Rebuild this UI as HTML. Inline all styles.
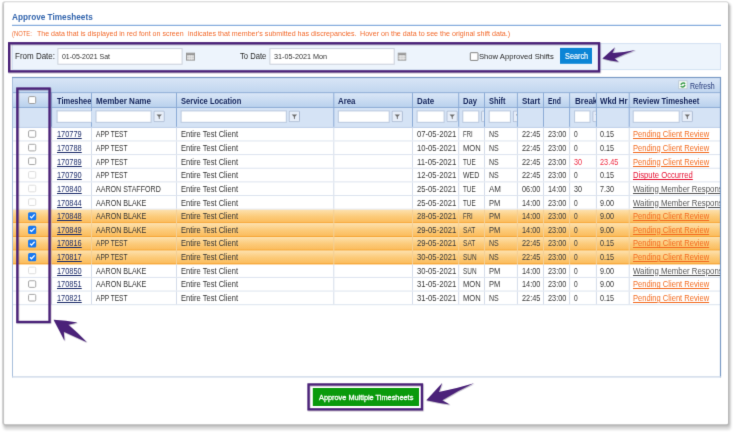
<!DOCTYPE html>
<html><head><meta charset="utf-8"><title>Approve Timesheets</title><style>
*{box-sizing:border-box;margin:0;padding:0}
html,body{width:736px;height:434px;overflow:hidden;background:#fff}
body{font-family:"Liberation Sans",sans-serif;font-size:8.2px;color:#333;position:relative}
#w{position:absolute;left:0;top:0;width:736px;height:434px;overflow:hidden;background:#fff;filter:url(#bl)}
.a{position:absolute;white-space:nowrap}
.t{line-height:12px;height:12px;transform-origin:0 50%}
.u{text-decoration:underline;text-decoration-thickness:.9px;text-underline-offset:1.1px}
svg.g{position:absolute;left:0;top:0}
</style></head><body>
<svg width="0" height="0" style="position:absolute"><filter id="bl" x="0" y="0" width="100%" height="100%" color-interpolation-filters="sRGB"><feConvolveMatrix order="3" kernelMatrix="0 .09 0 .09 .64 .09 0 .09 0" edgeMode="duplicate" preserveAlpha="true"/></filter></svg>
<div id="w">
<svg class="g" width="736" height="434" viewBox="0 0 736 434">
<defs>
<linearGradient id="gc" x1="0" y1="0" x2="0" y2="1"><stop offset="0" stop-color="#d8e5f6"/><stop offset="1" stop-color="#c1d6ef"/></linearGradient>
<linearGradient id="gh" x1="0" y1="0" x2="0" y2="1"><stop offset="0" stop-color="#dbe7f7"/><stop offset="1" stop-color="#b9d1ed"/></linearGradient>
<linearGradient id="go" x1="0" y1="0" x2="0" y2="1"><stop offset="0" stop-color="#fde1ae"/><stop offset=".5" stop-color="#fccb7a"/><stop offset="1" stop-color="#fbba58"/></linearGradient>
<filter id="ds" x="-20%" y="-20%" width="140%" height="140%"><feDropShadow dx=".5" dy=".7" stdDeviation=".5" flood-color="#2a1540" flood-opacity=".4"/></filter>
<filter id="cs" x="-5%" y="-5%" width="110%" height="110%"><feGaussianBlur stdDeviation=".8"/></filter><filter id="cs2" x="-5%" y="-5%" width="110%" height="110%"><feGaussianBlur stdDeviation="1"/></filter>
<symbol id="fb" viewBox="0 0 11.4 11.8"><rect x=".5" y=".5" width="10.4" height="10.8" rx="1" fill="#e7eef9" stroke="#aab9d2"/><path d="M3.1 4.1h5.4L6.3 6.3V8.7L5.3 8.1V6.3Z" fill="#6e6e6e"/></symbol>
<symbol id="cal" viewBox="0 0 9 8.4"><rect x=".5" y=".5" width="8" height="7.4" fill="#cbcbcb" stroke="#9a9a9a"/><rect x="1" y="1" width="7" height="1.5" fill="#929292"/><path d="M1 4.3h7M1 6.1h7M3.3 2.6v5M5.7 2.6v5" stroke="#ececec" stroke-width=".6"/></symbol>
</defs>
<g filter="url(#cs2)"><rect x="3.4" y="4" width="727.6" height="426" rx="3" fill="#000" opacity=".13"/></g>
<g filter="url(#cs)"><rect x="3.2" y="3" width="726.6" height="423.6" rx="2.5" fill="#000" opacity=".2"/></g>
<rect x="2.20" y="1.20" width="726.40" height="423.60" fill="#bdbdbd" rx="2.5" opacity=".62"/>
<rect x="4.10" y="2.30" width="723.90" height="422.00" fill="#fff" rx="1.5"/>
<rect x="12.00" y="24.80" width="709.00" height="1.00" fill="#6a9ad6"/>
<rect x="12.50" y="43.60" width="708.00" height="26.00" fill="#edf4fc" stroke="#d3e1f2" stroke-width="1"/>
<rect x="57.90" y="48.60" width="124.20" height="15.60" fill="#fff" stroke="#cbd1da" stroke-width="1"/>
<rect x="269.90" y="48.60" width="124.30" height="15.60" fill="#fff" stroke="#cbd1da" stroke-width="1"/>
<use href="#cal" x="186" y="52.4" width="9" height="8.4"/>
<use href="#cal" x="397.5" y="52.4" width="9" height="8.4"/>
<rect x="470.30" y="52.70" width="7.70" height="7.70" fill="#fff" stroke="#858585" stroke-width="1" rx="0.4"/>
<rect x="560.00" y="47.90" width="32.00" height="15.90" fill="#0b85d6"/>
<rect x="9.15" y="43.25" width="589.90" height="28.10" fill="none" stroke="#4b2279" stroke-width="2.3" filter="url(#ds)"/>
<path filter="url(#ds)" d="M602.4 58.4 L615 47.2 L612.4 53 Q624 52.4 635.5 50 Q624 54 614.6 58.6 L618.8 61.8 Q610 60.6 602.4 58.4Z" fill="#4b2279"/>
<rect x="12.50" y="77.50" width="708.00" height="299.40" fill="#fff"/>
<rect x="13.00" y="78.00" width="707.00" height="14.40" fill="url(#gc)"/>
<rect x="13.00" y="92.90" width="707.00" height="14.30" fill="url(#gh)"/>
<rect x="13.00" y="107.70" width="707.00" height="19.10" fill="#d5e3f5"/>
<rect x="13.00" y="92.15" width="707.00" height="1.00" fill="#8dacd6"/>
<rect x="13.00" y="106.95" width="707.00" height="1.00" fill="#8dacd6"/>
<rect x="13.00" y="126.80" width="707.00" height="1.00" fill="#b3c9e6"/>
<rect x="678.70" y="80.80" width="8.40" height="8.00" fill="#f6faf6" stroke="#b9c6d2" stroke-width="0.8"/>
<path transform="translate(678.5 80.7)" d="M2.2 5.4A2.3 2.3 0 0 0 5.6 5.6L6.6 4.4M6.6 3A2.3 2.3 0 0 0 3.3 2.8L2.2 4" stroke="#3c9c4c" stroke-width="1.5" fill="none"/>
<rect x="51.10" y="92.90" width="1.00" height="33.90" fill="#8dacd6"/>
<rect x="91.00" y="92.90" width="1.00" height="33.90" fill="#8dacd6"/>
<rect x="176.00" y="92.90" width="1.00" height="33.90" fill="#8dacd6"/>
<rect x="333.30" y="92.90" width="1.00" height="33.90" fill="#8dacd6"/>
<rect x="412.00" y="92.90" width="1.00" height="33.90" fill="#8dacd6"/>
<rect x="458.20" y="92.90" width="1.00" height="33.90" fill="#8dacd6"/>
<rect x="484.00" y="92.90" width="1.00" height="33.90" fill="#8dacd6"/>
<rect x="516.90" y="92.90" width="1.00" height="33.90" fill="#8dacd6"/>
<rect x="543.00" y="92.90" width="1.00" height="33.90" fill="#8dacd6"/>
<rect x="569.10" y="92.90" width="1.00" height="33.90" fill="#8dacd6"/>
<rect x="595.90" y="92.90" width="1.00" height="33.90" fill="#8dacd6"/>
<rect x="628.70" y="92.90" width="1.00" height="33.90" fill="#8dacd6"/>
<rect x="28.60" y="96.60" width="7.10" height="6.90" fill="#fff" stroke="#9a9a9a" stroke-width="0.95" rx="1.2"/>
<rect x="57.10" y="110.90" width="34.40" height="11.40" fill="#fff"/>
<rect x="56.60" y="110.40" width="34.40" height="1.00" fill="#b9c8de"/>
<rect x="56.60" y="121.80" width="34.40" height="1.00" fill="#b9c8de"/>
<rect x="56.60" y="110.40" width="1.00" height="12.40" fill="#b9c8de"/>
<rect x="96.00" y="110.90" width="55.10" height="11.40" fill="#fff" stroke="#b9c8de" stroke-width="1"/>
<use href="#fb" x="153.40" y="110.5" width="11.4" height="11.8"/>
<rect x="181.10" y="110.90" width="105.20" height="11.40" fill="#fff" stroke="#b9c8de" stroke-width="1"/>
<use href="#fb" x="288.60" y="110.5" width="11.4" height="11.8"/>
<rect x="338.30" y="110.90" width="50.90" height="11.40" fill="#fff" stroke="#b9c8de" stroke-width="1"/>
<use href="#fb" x="391.50" y="110.5" width="11.4" height="11.8"/>
<rect x="417.10" y="110.90" width="27.00" height="11.40" fill="#fff" stroke="#b9c8de" stroke-width="1"/>
<clipPath id="c446"><rect x="445.40" y="108" width="12.80" height="18"/></clipPath><g clip-path="url(#c446)"><use href="#fb" x="446.40" y="110.5" width="11.4" height="11.8"/></g>
<rect x="462.80" y="110.90" width="16.00" height="11.40" fill="#fff" stroke="#b9c8de" stroke-width="1"/>
<clipPath id="c481"><rect x="480.10" y="108" width="3.90" height="18"/></clipPath><g clip-path="url(#c481)"><use href="#fb" x="481.10" y="110.5" width="11.4" height="11.8"/></g>
<rect x="489.20" y="110.90" width="21.20" height="11.40" fill="#fff" stroke="#b9c8de" stroke-width="1"/>
<clipPath id="c512"><rect x="511.70" y="108" width="5.20" height="18"/></clipPath><g clip-path="url(#c512)"><use href="#fb" x="512.70" y="110.5" width="11.4" height="11.8"/></g>
<rect x="574.60" y="110.90" width="15.40" height="11.40" fill="#fff" stroke="#b9c8de" stroke-width="1"/>
<clipPath id="c592"><rect x="591.30" y="108" width="4.60" height="18"/></clipPath><g clip-path="url(#c592)"><use href="#fb" x="592.30" y="110.5" width="11.4" height="11.8"/></g>
<rect x="633.20" y="110.90" width="46.00" height="11.40" fill="#fff" stroke="#b9c8de" stroke-width="1"/>
<use href="#fb" x="681.50" y="110.5" width="11.4" height="11.8"/>
<rect x="13.00" y="140.45" width="707.00" height="1.00" fill="#dde4ef"/>
<rect x="51.10" y="127.80" width="1.00" height="12.65" fill="#d5ddea"/>
<rect x="91.00" y="127.80" width="1.00" height="12.65" fill="#d5ddea"/>
<rect x="176.00" y="127.80" width="1.00" height="12.65" fill="#d5ddea"/>
<rect x="333.30" y="127.80" width="1.00" height="12.65" fill="#d5ddea"/>
<rect x="412.00" y="127.80" width="1.00" height="12.65" fill="#d5ddea"/>
<rect x="458.20" y="127.80" width="1.00" height="12.65" fill="#d5ddea"/>
<rect x="484.00" y="127.80" width="1.00" height="12.65" fill="#d5ddea"/>
<rect x="516.90" y="127.80" width="1.00" height="12.65" fill="#d5ddea"/>
<rect x="543.00" y="127.80" width="1.00" height="12.65" fill="#d5ddea"/>
<rect x="569.10" y="127.80" width="1.00" height="12.65" fill="#d5ddea"/>
<rect x="595.90" y="127.80" width="1.00" height="12.65" fill="#d5ddea"/>
<rect x="628.70" y="127.80" width="1.00" height="12.65" fill="#d5ddea"/>
<rect x="28.55" y="130.65" width="7.20" height="6.60" fill="#fff" stroke="#a2a2a2" stroke-width="0.95" rx="1.2"/>
<rect x="13.00" y="154.09" width="707.00" height="1.00" fill="#dde4ef"/>
<rect x="51.10" y="141.45" width="1.00" height="12.65" fill="#d5ddea"/>
<rect x="91.00" y="141.45" width="1.00" height="12.65" fill="#d5ddea"/>
<rect x="176.00" y="141.45" width="1.00" height="12.65" fill="#d5ddea"/>
<rect x="333.30" y="141.45" width="1.00" height="12.65" fill="#d5ddea"/>
<rect x="412.00" y="141.45" width="1.00" height="12.65" fill="#d5ddea"/>
<rect x="458.20" y="141.45" width="1.00" height="12.65" fill="#d5ddea"/>
<rect x="484.00" y="141.45" width="1.00" height="12.65" fill="#d5ddea"/>
<rect x="516.90" y="141.45" width="1.00" height="12.65" fill="#d5ddea"/>
<rect x="543.00" y="141.45" width="1.00" height="12.65" fill="#d5ddea"/>
<rect x="569.10" y="141.45" width="1.00" height="12.65" fill="#d5ddea"/>
<rect x="595.90" y="141.45" width="1.00" height="12.65" fill="#d5ddea"/>
<rect x="628.70" y="141.45" width="1.00" height="12.65" fill="#d5ddea"/>
<rect x="28.55" y="144.30" width="7.20" height="6.60" fill="#fff" stroke="#a2a2a2" stroke-width="0.95" rx="1.2"/>
<rect x="13.00" y="167.74" width="707.00" height="1.00" fill="#dde4ef"/>
<rect x="51.10" y="155.09" width="1.00" height="12.65" fill="#d5ddea"/>
<rect x="91.00" y="155.09" width="1.00" height="12.65" fill="#d5ddea"/>
<rect x="176.00" y="155.09" width="1.00" height="12.65" fill="#d5ddea"/>
<rect x="333.30" y="155.09" width="1.00" height="12.65" fill="#d5ddea"/>
<rect x="412.00" y="155.09" width="1.00" height="12.65" fill="#d5ddea"/>
<rect x="458.20" y="155.09" width="1.00" height="12.65" fill="#d5ddea"/>
<rect x="484.00" y="155.09" width="1.00" height="12.65" fill="#d5ddea"/>
<rect x="516.90" y="155.09" width="1.00" height="12.65" fill="#d5ddea"/>
<rect x="543.00" y="155.09" width="1.00" height="12.65" fill="#d5ddea"/>
<rect x="569.10" y="155.09" width="1.00" height="12.65" fill="#d5ddea"/>
<rect x="595.90" y="155.09" width="1.00" height="12.65" fill="#d5ddea"/>
<rect x="628.70" y="155.09" width="1.00" height="12.65" fill="#d5ddea"/>
<rect x="28.55" y="157.94" width="7.20" height="6.60" fill="#fff" stroke="#a2a2a2" stroke-width="0.95" rx="1.2"/>
<rect x="13.00" y="181.38" width="707.00" height="1.00" fill="#dde4ef"/>
<rect x="51.10" y="168.74" width="1.00" height="12.65" fill="#d5ddea"/>
<rect x="91.00" y="168.74" width="1.00" height="12.65" fill="#d5ddea"/>
<rect x="176.00" y="168.74" width="1.00" height="12.65" fill="#d5ddea"/>
<rect x="333.30" y="168.74" width="1.00" height="12.65" fill="#d5ddea"/>
<rect x="412.00" y="168.74" width="1.00" height="12.65" fill="#d5ddea"/>
<rect x="458.20" y="168.74" width="1.00" height="12.65" fill="#d5ddea"/>
<rect x="484.00" y="168.74" width="1.00" height="12.65" fill="#d5ddea"/>
<rect x="516.90" y="168.74" width="1.00" height="12.65" fill="#d5ddea"/>
<rect x="543.00" y="168.74" width="1.00" height="12.65" fill="#d5ddea"/>
<rect x="569.10" y="168.74" width="1.00" height="12.65" fill="#d5ddea"/>
<rect x="595.90" y="168.74" width="1.00" height="12.65" fill="#d5ddea"/>
<rect x="628.70" y="168.74" width="1.00" height="12.65" fill="#d5ddea"/>
<rect x="28.55" y="171.59" width="7.20" height="6.60" fill="#fff" stroke="#dcdcdc" stroke-width="0.95" rx="1.2"/>
<rect x="13.00" y="195.03" width="707.00" height="1.00" fill="#dde4ef"/>
<rect x="51.10" y="182.38" width="1.00" height="12.65" fill="#d5ddea"/>
<rect x="91.00" y="182.38" width="1.00" height="12.65" fill="#d5ddea"/>
<rect x="176.00" y="182.38" width="1.00" height="12.65" fill="#d5ddea"/>
<rect x="333.30" y="182.38" width="1.00" height="12.65" fill="#d5ddea"/>
<rect x="412.00" y="182.38" width="1.00" height="12.65" fill="#d5ddea"/>
<rect x="458.20" y="182.38" width="1.00" height="12.65" fill="#d5ddea"/>
<rect x="484.00" y="182.38" width="1.00" height="12.65" fill="#d5ddea"/>
<rect x="516.90" y="182.38" width="1.00" height="12.65" fill="#d5ddea"/>
<rect x="543.00" y="182.38" width="1.00" height="12.65" fill="#d5ddea"/>
<rect x="569.10" y="182.38" width="1.00" height="12.65" fill="#d5ddea"/>
<rect x="595.90" y="182.38" width="1.00" height="12.65" fill="#d5ddea"/>
<rect x="628.70" y="182.38" width="1.00" height="12.65" fill="#d5ddea"/>
<rect x="28.55" y="185.23" width="7.20" height="6.60" fill="#fff" stroke="#dcdcdc" stroke-width="0.95" rx="1.2"/>
<rect x="13.00" y="208.68" width="707.00" height="1.00" fill="#dde4ef"/>
<rect x="51.10" y="196.03" width="1.00" height="12.65" fill="#d5ddea"/>
<rect x="91.00" y="196.03" width="1.00" height="12.65" fill="#d5ddea"/>
<rect x="176.00" y="196.03" width="1.00" height="12.65" fill="#d5ddea"/>
<rect x="333.30" y="196.03" width="1.00" height="12.65" fill="#d5ddea"/>
<rect x="412.00" y="196.03" width="1.00" height="12.65" fill="#d5ddea"/>
<rect x="458.20" y="196.03" width="1.00" height="12.65" fill="#d5ddea"/>
<rect x="484.00" y="196.03" width="1.00" height="12.65" fill="#d5ddea"/>
<rect x="516.90" y="196.03" width="1.00" height="12.65" fill="#d5ddea"/>
<rect x="543.00" y="196.03" width="1.00" height="12.65" fill="#d5ddea"/>
<rect x="569.10" y="196.03" width="1.00" height="12.65" fill="#d5ddea"/>
<rect x="595.90" y="196.03" width="1.00" height="12.65" fill="#d5ddea"/>
<rect x="628.70" y="196.03" width="1.00" height="12.65" fill="#d5ddea"/>
<rect x="28.55" y="198.88" width="7.20" height="6.60" fill="#fff" stroke="#dcdcdc" stroke-width="0.95" rx="1.2"/>
<rect x="13.00" y="209.68" width="707.00" height="13.65" fill="url(#go)"/>
<rect x="13.00" y="222.32" width="707.00" height="1.00" fill="#f6a535"/>
<rect x="51.10" y="209.68" width="1.00" height="13.65" fill="#f3cf95"/>
<rect x="91.00" y="209.68" width="1.00" height="13.65" fill="#f3cf95"/>
<rect x="176.00" y="209.68" width="1.00" height="13.65" fill="#f3cf95"/>
<rect x="333.30" y="209.68" width="1.00" height="13.65" fill="#f3cf95"/>
<rect x="412.00" y="209.68" width="1.00" height="13.65" fill="#f3cf95"/>
<rect x="458.20" y="209.68" width="1.00" height="13.65" fill="#f3cf95"/>
<rect x="484.00" y="209.68" width="1.00" height="13.65" fill="#f3cf95"/>
<rect x="516.90" y="209.68" width="1.00" height="13.65" fill="#f3cf95"/>
<rect x="543.00" y="209.68" width="1.00" height="13.65" fill="#f3cf95"/>
<rect x="569.10" y="209.68" width="1.00" height="13.65" fill="#f3cf95"/>
<rect x="595.90" y="209.68" width="1.00" height="13.65" fill="#f3cf95"/>
<rect x="628.70" y="209.68" width="1.00" height="13.65" fill="#f3cf95"/>
<rect x="28.10" y="212.18" width="8.10" height="8.10" fill="#1878f0" rx="1.5"/>
<path transform="translate(28.3 212.43)" d="M1.7 3.9L3.2 5.4L6.3 2.0" stroke="#fff" stroke-width="1.25" fill="none"/>
<rect x="13.00" y="223.32" width="707.00" height="13.65" fill="url(#go)"/>
<rect x="13.00" y="235.97" width="707.00" height="1.00" fill="#f6a535"/>
<rect x="51.10" y="223.32" width="1.00" height="13.65" fill="#f3cf95"/>
<rect x="91.00" y="223.32" width="1.00" height="13.65" fill="#f3cf95"/>
<rect x="176.00" y="223.32" width="1.00" height="13.65" fill="#f3cf95"/>
<rect x="333.30" y="223.32" width="1.00" height="13.65" fill="#f3cf95"/>
<rect x="412.00" y="223.32" width="1.00" height="13.65" fill="#f3cf95"/>
<rect x="458.20" y="223.32" width="1.00" height="13.65" fill="#f3cf95"/>
<rect x="484.00" y="223.32" width="1.00" height="13.65" fill="#f3cf95"/>
<rect x="516.90" y="223.32" width="1.00" height="13.65" fill="#f3cf95"/>
<rect x="543.00" y="223.32" width="1.00" height="13.65" fill="#f3cf95"/>
<rect x="569.10" y="223.32" width="1.00" height="13.65" fill="#f3cf95"/>
<rect x="595.90" y="223.32" width="1.00" height="13.65" fill="#f3cf95"/>
<rect x="628.70" y="223.32" width="1.00" height="13.65" fill="#f3cf95"/>
<rect x="28.10" y="225.82" width="8.10" height="8.10" fill="#1878f0" rx="1.5"/>
<path transform="translate(28.3 226.07)" d="M1.7 3.9L3.2 5.4L6.3 2.0" stroke="#fff" stroke-width="1.25" fill="none"/>
<rect x="13.00" y="236.97" width="707.00" height="13.65" fill="url(#go)"/>
<rect x="13.00" y="249.61" width="707.00" height="1.00" fill="#f6a535"/>
<rect x="51.10" y="236.97" width="1.00" height="13.65" fill="#f3cf95"/>
<rect x="91.00" y="236.97" width="1.00" height="13.65" fill="#f3cf95"/>
<rect x="176.00" y="236.97" width="1.00" height="13.65" fill="#f3cf95"/>
<rect x="333.30" y="236.97" width="1.00" height="13.65" fill="#f3cf95"/>
<rect x="412.00" y="236.97" width="1.00" height="13.65" fill="#f3cf95"/>
<rect x="458.20" y="236.97" width="1.00" height="13.65" fill="#f3cf95"/>
<rect x="484.00" y="236.97" width="1.00" height="13.65" fill="#f3cf95"/>
<rect x="516.90" y="236.97" width="1.00" height="13.65" fill="#f3cf95"/>
<rect x="543.00" y="236.97" width="1.00" height="13.65" fill="#f3cf95"/>
<rect x="569.10" y="236.97" width="1.00" height="13.65" fill="#f3cf95"/>
<rect x="595.90" y="236.97" width="1.00" height="13.65" fill="#f3cf95"/>
<rect x="628.70" y="236.97" width="1.00" height="13.65" fill="#f3cf95"/>
<rect x="28.10" y="239.47" width="8.10" height="8.10" fill="#1878f0" rx="1.5"/>
<path transform="translate(28.3 239.72)" d="M1.7 3.9L3.2 5.4L6.3 2.0" stroke="#fff" stroke-width="1.25" fill="none"/>
<rect x="13.00" y="250.61" width="707.00" height="13.65" fill="url(#go)"/>
<rect x="13.00" y="263.26" width="707.00" height="1.00" fill="#f6a535"/>
<rect x="51.10" y="250.61" width="1.00" height="13.65" fill="#f3cf95"/>
<rect x="91.00" y="250.61" width="1.00" height="13.65" fill="#f3cf95"/>
<rect x="176.00" y="250.61" width="1.00" height="13.65" fill="#f3cf95"/>
<rect x="333.30" y="250.61" width="1.00" height="13.65" fill="#f3cf95"/>
<rect x="412.00" y="250.61" width="1.00" height="13.65" fill="#f3cf95"/>
<rect x="458.20" y="250.61" width="1.00" height="13.65" fill="#f3cf95"/>
<rect x="484.00" y="250.61" width="1.00" height="13.65" fill="#f3cf95"/>
<rect x="516.90" y="250.61" width="1.00" height="13.65" fill="#f3cf95"/>
<rect x="543.00" y="250.61" width="1.00" height="13.65" fill="#f3cf95"/>
<rect x="569.10" y="250.61" width="1.00" height="13.65" fill="#f3cf95"/>
<rect x="595.90" y="250.61" width="1.00" height="13.65" fill="#f3cf95"/>
<rect x="628.70" y="250.61" width="1.00" height="13.65" fill="#f3cf95"/>
<rect x="28.10" y="253.11" width="8.10" height="8.10" fill="#1878f0" rx="1.5"/>
<path transform="translate(28.3 253.36)" d="M1.7 3.9L3.2 5.4L6.3 2.0" stroke="#fff" stroke-width="1.25" fill="none"/>
<rect x="13.00" y="276.91" width="707.00" height="1.00" fill="#dde4ef"/>
<rect x="51.10" y="264.26" width="1.00" height="12.65" fill="#d5ddea"/>
<rect x="91.00" y="264.26" width="1.00" height="12.65" fill="#d5ddea"/>
<rect x="176.00" y="264.26" width="1.00" height="12.65" fill="#d5ddea"/>
<rect x="333.30" y="264.26" width="1.00" height="12.65" fill="#d5ddea"/>
<rect x="412.00" y="264.26" width="1.00" height="12.65" fill="#d5ddea"/>
<rect x="458.20" y="264.26" width="1.00" height="12.65" fill="#d5ddea"/>
<rect x="484.00" y="264.26" width="1.00" height="12.65" fill="#d5ddea"/>
<rect x="516.90" y="264.26" width="1.00" height="12.65" fill="#d5ddea"/>
<rect x="543.00" y="264.26" width="1.00" height="12.65" fill="#d5ddea"/>
<rect x="569.10" y="264.26" width="1.00" height="12.65" fill="#d5ddea"/>
<rect x="595.90" y="264.26" width="1.00" height="12.65" fill="#d5ddea"/>
<rect x="628.70" y="264.26" width="1.00" height="12.65" fill="#d5ddea"/>
<rect x="28.55" y="267.11" width="7.20" height="6.60" fill="#fff" stroke="#dcdcdc" stroke-width="0.95" rx="1.2"/>
<rect x="13.00" y="290.55" width="707.00" height="1.00" fill="#dde4ef"/>
<rect x="51.10" y="277.91" width="1.00" height="12.65" fill="#d5ddea"/>
<rect x="91.00" y="277.91" width="1.00" height="12.65" fill="#d5ddea"/>
<rect x="176.00" y="277.91" width="1.00" height="12.65" fill="#d5ddea"/>
<rect x="333.30" y="277.91" width="1.00" height="12.65" fill="#d5ddea"/>
<rect x="412.00" y="277.91" width="1.00" height="12.65" fill="#d5ddea"/>
<rect x="458.20" y="277.91" width="1.00" height="12.65" fill="#d5ddea"/>
<rect x="484.00" y="277.91" width="1.00" height="12.65" fill="#d5ddea"/>
<rect x="516.90" y="277.91" width="1.00" height="12.65" fill="#d5ddea"/>
<rect x="543.00" y="277.91" width="1.00" height="12.65" fill="#d5ddea"/>
<rect x="569.10" y="277.91" width="1.00" height="12.65" fill="#d5ddea"/>
<rect x="595.90" y="277.91" width="1.00" height="12.65" fill="#d5ddea"/>
<rect x="628.70" y="277.91" width="1.00" height="12.65" fill="#d5ddea"/>
<rect x="28.55" y="280.76" width="7.20" height="6.60" fill="#fff" stroke="#a2a2a2" stroke-width="0.95" rx="1.2"/>
<rect x="13.00" y="304.20" width="707.00" height="1.00" fill="#dde4ef"/>
<rect x="51.10" y="291.55" width="1.00" height="12.65" fill="#d5ddea"/>
<rect x="91.00" y="291.55" width="1.00" height="12.65" fill="#d5ddea"/>
<rect x="176.00" y="291.55" width="1.00" height="12.65" fill="#d5ddea"/>
<rect x="333.30" y="291.55" width="1.00" height="12.65" fill="#d5ddea"/>
<rect x="412.00" y="291.55" width="1.00" height="12.65" fill="#d5ddea"/>
<rect x="458.20" y="291.55" width="1.00" height="12.65" fill="#d5ddea"/>
<rect x="484.00" y="291.55" width="1.00" height="12.65" fill="#d5ddea"/>
<rect x="516.90" y="291.55" width="1.00" height="12.65" fill="#d5ddea"/>
<rect x="543.00" y="291.55" width="1.00" height="12.65" fill="#d5ddea"/>
<rect x="569.10" y="291.55" width="1.00" height="12.65" fill="#d5ddea"/>
<rect x="595.90" y="291.55" width="1.00" height="12.65" fill="#d5ddea"/>
<rect x="628.70" y="291.55" width="1.00" height="12.65" fill="#d5ddea"/>
<rect x="28.55" y="294.40" width="7.20" height="6.60" fill="#fff" stroke="#a2a2a2" stroke-width="0.95" rx="1.2"/>
<rect x="12.00" y="77.00" width="1.00" height="300.40" fill="#a9bfdc"/>
<rect x="719.90" y="77.00" width="1.20" height="300.40" fill="#7b9bc6"/>
<rect x="12.00" y="76.90" width="709.00" height="1.20" fill="#7b9bc6"/>
<rect x="12.00" y="376.30" width="709.00" height="1.20" fill="#c6d3e6"/>
<rect x="17.35" y="88.55" width="32.20" height="233.40" fill="none" stroke="#4b2279" stroke-width="2.3" filter="url(#ds)"/>
<path filter="url(#ds)" d="M53.6 319.8 Q66 320.4 77.4 322.4 L68.4 324.8 Q78 333 86.9 342.2 Q75 337 63.8 331.8 L64.5 340.7 Q59 330 53.6 319.8Z" fill="#4b2279"/>
<rect x="312.80" y="388.00" width="106.20" height="18.00" fill="#0a9a0c"/>
<rect x="308.55" y="384.45" width="113.40" height="24.90" fill="none" stroke="#4b2279" stroke-width="2.3" filter="url(#ds)"/>
<path filter="url(#ds)" d="M426.3 400.3 L442.2 383 L438.9 392 Q456 388.6 473.9 383.2 Q457 391 442.3 400.2 L449.8 404.4 Q438 403 426.3 400.3Z" fill="#4b2279"/>
</svg>
<div class="a t" style="left:690.4px;top:80.00px;font-size:8.8px;color:#253878;transform:scaleX(0.8016)">Refresh</div>
<div class="a t u" style="left:57px;top:129.30px;font-size:8.2px;color:#1c2c6a;transform:scaleX(0.9057)">170779</div>
<div class="a t" style="left:96px;top:129.30px;font-size:8.2px;color:#333;transform:scaleX(0.8016)">APP TEST</div>
<div class="a t" style="left:181px;top:129.30px;font-size:8.2px;color:#333;transform:scaleX(0.9231)">Entire Test Client</div>
<div class="a t" style="left:417px;top:129.30px;font-size:8.2px;color:#3a3a3a;transform:scaleX(0.9382)">07-05-2021</div>
<div class="a t" style="left:463.3px;top:129.30px;font-size:8.2px;color:#3a3a3a;transform:scaleX(0.7347)">FRI</div>
<div class="a t" style="left:488.9px;top:129.30px;font-size:8.2px;color:#3a3a3a;transform:scaleX(0.8615)">NS</div>
<div class="a t" style="left:522px;top:129.30px;font-size:8.2px;color:#3a3a3a;transform:scaleX(0.8976)">22:45</div>
<div class="a t" style="left:548px;top:129.30px;font-size:8.2px;color:#3a3a3a;transform:scaleX(0.8976)">23:00</div>
<div class="a t" style="left:574.3px;top:129.30px;font-size:8.2px;color:#3a3a3a;transform:scaleX(0.811)">0</div>
<div class="a t" style="left:600.3px;top:129.30px;font-size:8.2px;color:#3a3a3a;transform:scaleX(0.8784)">0.15</div>
<div class="a t u" style="left:633.4px;top:129.30px;font-size:8.2px;color:#f36c21;transform:scaleX(0.9238)">Pending Client Review</div>
<div class="a t u" style="left:57px;top:142.95px;font-size:8.2px;color:#1c2c6a;transform:scaleX(0.9057)">170788</div>
<div class="a t" style="left:96px;top:142.95px;font-size:8.2px;color:#333;transform:scaleX(0.8016)">APP TEST</div>
<div class="a t" style="left:181px;top:142.95px;font-size:8.2px;color:#333;transform:scaleX(0.9231)">Entire Test Client</div>
<div class="a t" style="left:417px;top:142.95px;font-size:8.2px;color:#3a3a3a;transform:scaleX(0.9382)">10-05-2021</div>
<div class="a t" style="left:463.3px;top:142.95px;font-size:8.2px;color:#3a3a3a;transform:scaleX(0.9262)">MON</div>
<div class="a t" style="left:488.9px;top:142.95px;font-size:8.2px;color:#3a3a3a;transform:scaleX(0.8615)">NS</div>
<div class="a t" style="left:522px;top:142.95px;font-size:8.2px;color:#3a3a3a;transform:scaleX(0.8976)">22:45</div>
<div class="a t" style="left:548px;top:142.95px;font-size:8.2px;color:#3a3a3a;transform:scaleX(0.8976)">23:00</div>
<div class="a t" style="left:574.3px;top:142.95px;font-size:8.2px;color:#3a3a3a;transform:scaleX(0.811)">0</div>
<div class="a t" style="left:600.3px;top:142.95px;font-size:8.2px;color:#3a3a3a;transform:scaleX(0.8784)">0.15</div>
<div class="a t u" style="left:633.4px;top:142.95px;font-size:8.2px;color:#f36c21;transform:scaleX(0.9238)">Pending Client Review</div>
<div class="a t u" style="left:57px;top:156.59px;font-size:8.2px;color:#1c2c6a;transform:scaleX(0.9057)">170789</div>
<div class="a t" style="left:96px;top:156.59px;font-size:8.2px;color:#333;transform:scaleX(0.8016)">APP TEST</div>
<div class="a t" style="left:181px;top:156.59px;font-size:8.2px;color:#333;transform:scaleX(0.9231)">Entire Test Client</div>
<div class="a t" style="left:417px;top:156.59px;font-size:8.2px;color:#3a3a3a;transform:scaleX(0.952)">11-05-2021</div>
<div class="a t" style="left:463.3px;top:156.59px;font-size:8.2px;color:#3a3a3a;transform:scaleX(0.7695)">TUE</div>
<div class="a t" style="left:488.9px;top:156.59px;font-size:8.2px;color:#3a3a3a;transform:scaleX(0.8615)">NS</div>
<div class="a t" style="left:522px;top:156.59px;font-size:8.2px;color:#3a3a3a;transform:scaleX(0.8976)">22:45</div>
<div class="a t" style="left:548px;top:156.59px;font-size:8.2px;color:#3a3a3a;transform:scaleX(0.8976)">23:00</div>
<div class="a t" style="left:574.3px;top:156.59px;font-size:8.2px;color:#ee2d45;transform:scaleX(0.8782)">30</div>
<div class="a t" style="left:600.3px;top:156.59px;font-size:8.2px;color:#ee2d45;transform:scaleX(0.8927)">23.45</div>
<div class="a t u" style="left:633.4px;top:156.59px;font-size:8.2px;color:#f36c21;transform:scaleX(0.9238)">Pending Client Review</div>
<div class="a t u" style="left:57px;top:170.24px;font-size:8.2px;color:#1c2c6a;transform:scaleX(0.9057)">170790</div>
<div class="a t" style="left:96px;top:170.24px;font-size:8.2px;color:#333;transform:scaleX(0.8016)">APP TEST</div>
<div class="a t" style="left:181px;top:170.24px;font-size:8.2px;color:#333;transform:scaleX(0.9231)">Entire Test Client</div>
<div class="a t" style="left:417px;top:170.24px;font-size:8.2px;color:#3a3a3a;transform:scaleX(0.9382)">12-05-2021</div>
<div class="a t" style="left:463.3px;top:170.24px;font-size:8.2px;color:#3a3a3a;transform:scaleX(0.853)">WED</div>
<div class="a t" style="left:488.9px;top:170.24px;font-size:8.2px;color:#3a3a3a;transform:scaleX(0.8615)">NS</div>
<div class="a t" style="left:522px;top:170.24px;font-size:8.2px;color:#3a3a3a;transform:scaleX(0.8976)">22:45</div>
<div class="a t" style="left:548px;top:170.24px;font-size:8.2px;color:#3a3a3a;transform:scaleX(0.8976)">23:00</div>
<div class="a t" style="left:574.3px;top:170.24px;font-size:8.2px;color:#3a3a3a;transform:scaleX(0.811)">0</div>
<div class="a t" style="left:600.3px;top:170.24px;font-size:8.2px;color:#3a3a3a;transform:scaleX(0.8784)">0.15</div>
<div class="a t u" style="left:633.4px;top:170.24px;font-size:8.2px;color:#e60f30;transform:scaleX(0.9385)">Dispute Occurred</div>
<div class="a t u" style="left:57px;top:183.88px;font-size:8.2px;color:#1c2c6a;transform:scaleX(0.9057)">170840</div>
<div class="a t" style="left:96px;top:183.88px;font-size:8.2px;color:#333;transform:scaleX(0.8644)">AARON STAFFORD</div>
<div class="a t" style="left:181px;top:183.88px;font-size:8.2px;color:#333;transform:scaleX(0.9231)">Entire Test Client</div>
<div class="a t" style="left:417px;top:183.88px;font-size:8.2px;color:#3a3a3a;transform:scaleX(0.9382)">25-05-2021</div>
<div class="a t" style="left:463.3px;top:183.88px;font-size:8.2px;color:#3a3a3a;transform:scaleX(0.7695)">TUE</div>
<div class="a t" style="left:488.9px;top:183.88px;font-size:8.2px;color:#3a3a3a;transform:scaleX(0.9771)">AM</div>
<div class="a t" style="left:522px;top:183.88px;font-size:8.2px;color:#3a3a3a;transform:scaleX(0.8976)">06:00</div>
<div class="a t" style="left:548px;top:183.88px;font-size:8.2px;color:#3a3a3a;transform:scaleX(0.8976)">14:00</div>
<div class="a t" style="left:574.3px;top:183.88px;font-size:8.2px;color:#3a3a3a;transform:scaleX(0.8782)">30</div>
<div class="a t" style="left:600.3px;top:183.88px;font-size:8.2px;color:#3a3a3a;transform:scaleX(0.8784)">7.30</div>
<div class="a" style="left:633.4px;top:183.88px;width:86.80px;height:12px;overflow:hidden"><div class="a t u" style="left:0;top:0;font-size:8.2px;color:#555;transform:scaleX(0.955)">Waiting Member Response</div></div>
<div class="a t u" style="left:57px;top:197.53px;font-size:8.2px;color:#1c2c6a;transform:scaleX(0.9057)">170844</div>
<div class="a t" style="left:96px;top:197.53px;font-size:8.2px;color:#333;transform:scaleX(0.8694)">AARON BLAKE</div>
<div class="a t" style="left:181px;top:197.53px;font-size:8.2px;color:#333;transform:scaleX(0.9231)">Entire Test Client</div>
<div class="a t" style="left:417px;top:197.53px;font-size:8.2px;color:#3a3a3a;transform:scaleX(0.9382)">25-05-2021</div>
<div class="a t" style="left:463.3px;top:197.53px;font-size:8.2px;color:#3a3a3a;transform:scaleX(0.7695)">TUE</div>
<div class="a t" style="left:488.9px;top:197.53px;font-size:8.2px;color:#3a3a3a;transform:scaleX(0.9201)">PM</div>
<div class="a t" style="left:522px;top:197.53px;font-size:8.2px;color:#3a3a3a;transform:scaleX(0.8976)">14:00</div>
<div class="a t" style="left:548px;top:197.53px;font-size:8.2px;color:#3a3a3a;transform:scaleX(0.8976)">23:00</div>
<div class="a t" style="left:574.3px;top:197.53px;font-size:8.2px;color:#3a3a3a;transform:scaleX(0.811)">0</div>
<div class="a t" style="left:600.3px;top:197.53px;font-size:8.2px;color:#3a3a3a;transform:scaleX(0.8784)">9.00</div>
<div class="a" style="left:633.4px;top:197.53px;width:86.80px;height:12px;overflow:hidden"><div class="a t u" style="left:0;top:0;font-size:8.2px;color:#555;transform:scaleX(0.955)">Waiting Member Response</div></div>
<div class="a t u" style="left:57px;top:211.18px;font-size:8.2px;color:#1c2c6a;transform:scaleX(0.9057)">170848</div>
<div class="a t" style="left:96px;top:211.18px;font-size:8.2px;color:#333;transform:scaleX(0.8694)">AARON BLAKE</div>
<div class="a t" style="left:181px;top:211.18px;font-size:8.2px;color:#333;transform:scaleX(0.9231)">Entire Test Client</div>
<div class="a t" style="left:417px;top:211.18px;font-size:8.2px;color:#3a3a3a;transform:scaleX(0.9382)">28-05-2021</div>
<div class="a t" style="left:463.3px;top:211.18px;font-size:8.2px;color:#3a3a3a;transform:scaleX(0.7347)">FRI</div>
<div class="a t" style="left:488.9px;top:211.18px;font-size:8.2px;color:#3a3a3a;transform:scaleX(0.9201)">PM</div>
<div class="a t" style="left:522px;top:211.18px;font-size:8.2px;color:#3a3a3a;transform:scaleX(0.8976)">14:00</div>
<div class="a t" style="left:548px;top:211.18px;font-size:8.2px;color:#3a3a3a;transform:scaleX(0.8976)">23:00</div>
<div class="a t" style="left:574.3px;top:211.18px;font-size:8.2px;color:#3a3a3a;transform:scaleX(0.811)">0</div>
<div class="a t" style="left:600.3px;top:211.18px;font-size:8.2px;color:#3a3a3a;transform:scaleX(0.8784)">9.00</div>
<div class="a t u" style="left:633.4px;top:211.18px;font-size:8.2px;color:#f36c21;transform:scaleX(0.9238)">Pending Client Review</div>
<div class="a t u" style="left:57px;top:224.82px;font-size:8.2px;color:#1c2c6a;transform:scaleX(0.9057)">170849</div>
<div class="a t" style="left:96px;top:224.82px;font-size:8.2px;color:#333;transform:scaleX(0.8694)">AARON BLAKE</div>
<div class="a t" style="left:181px;top:224.82px;font-size:8.2px;color:#333;transform:scaleX(0.9231)">Entire Test Client</div>
<div class="a t" style="left:417px;top:224.82px;font-size:8.2px;color:#3a3a3a;transform:scaleX(0.9382)">29-05-2021</div>
<div class="a t" style="left:463.3px;top:224.82px;font-size:8.2px;color:#3a3a3a;transform:scaleX(0.809)">SAT</div>
<div class="a t" style="left:488.9px;top:224.82px;font-size:8.2px;color:#3a3a3a;transform:scaleX(0.9201)">PM</div>
<div class="a t" style="left:522px;top:224.82px;font-size:8.2px;color:#3a3a3a;transform:scaleX(0.8976)">14:00</div>
<div class="a t" style="left:548px;top:224.82px;font-size:8.2px;color:#3a3a3a;transform:scaleX(0.8976)">23:00</div>
<div class="a t" style="left:574.3px;top:224.82px;font-size:8.2px;color:#3a3a3a;transform:scaleX(0.811)">0</div>
<div class="a t" style="left:600.3px;top:224.82px;font-size:8.2px;color:#3a3a3a;transform:scaleX(0.8784)">9.00</div>
<div class="a t u" style="left:633.4px;top:224.82px;font-size:8.2px;color:#f36c21;transform:scaleX(0.9238)">Pending Client Review</div>
<div class="a t u" style="left:57px;top:238.47px;font-size:8.2px;color:#1c2c6a;transform:scaleX(0.9057)">170816</div>
<div class="a t" style="left:96px;top:238.47px;font-size:8.2px;color:#333;transform:scaleX(0.8016)">APP TEST</div>
<div class="a t" style="left:181px;top:238.47px;font-size:8.2px;color:#333;transform:scaleX(0.9231)">Entire Test Client</div>
<div class="a t" style="left:417px;top:238.47px;font-size:8.2px;color:#3a3a3a;transform:scaleX(0.9382)">29-05-2021</div>
<div class="a t" style="left:463.3px;top:238.47px;font-size:8.2px;color:#3a3a3a;transform:scaleX(0.809)">SAT</div>
<div class="a t" style="left:488.9px;top:238.47px;font-size:8.2px;color:#3a3a3a;transform:scaleX(0.8615)">NS</div>
<div class="a t" style="left:522px;top:238.47px;font-size:8.2px;color:#3a3a3a;transform:scaleX(0.8976)">22:45</div>
<div class="a t" style="left:548px;top:238.47px;font-size:8.2px;color:#3a3a3a;transform:scaleX(0.8976)">23:00</div>
<div class="a t" style="left:574.3px;top:238.47px;font-size:8.2px;color:#3a3a3a;transform:scaleX(0.811)">0</div>
<div class="a t" style="left:600.3px;top:238.47px;font-size:8.2px;color:#3a3a3a;transform:scaleX(0.8784)">0.15</div>
<div class="a t u" style="left:633.4px;top:238.47px;font-size:8.2px;color:#f36c21;transform:scaleX(0.9238)">Pending Client Review</div>
<div class="a t u" style="left:57px;top:252.11px;font-size:8.2px;color:#1c2c6a;transform:scaleX(0.9057)">170817</div>
<div class="a t" style="left:96px;top:252.11px;font-size:8.2px;color:#333;transform:scaleX(0.8016)">APP TEST</div>
<div class="a t" style="left:181px;top:252.11px;font-size:8.2px;color:#333;transform:scaleX(0.9231)">Entire Test Client</div>
<div class="a t" style="left:417px;top:252.11px;font-size:8.2px;color:#3a3a3a;transform:scaleX(0.9382)">30-05-2021</div>
<div class="a t" style="left:463.3px;top:252.11px;font-size:8.2px;color:#3a3a3a;transform:scaleX(0.7863)">SUN</div>
<div class="a t" style="left:488.9px;top:252.11px;font-size:8.2px;color:#3a3a3a;transform:scaleX(0.8615)">NS</div>
<div class="a t" style="left:522px;top:252.11px;font-size:8.2px;color:#3a3a3a;transform:scaleX(0.8976)">22:45</div>
<div class="a t" style="left:548px;top:252.11px;font-size:8.2px;color:#3a3a3a;transform:scaleX(0.8976)">23:00</div>
<div class="a t" style="left:574.3px;top:252.11px;font-size:8.2px;color:#3a3a3a;transform:scaleX(0.811)">0</div>
<div class="a t" style="left:600.3px;top:252.11px;font-size:8.2px;color:#3a3a3a;transform:scaleX(0.8784)">0.15</div>
<div class="a t u" style="left:633.4px;top:252.11px;font-size:8.2px;color:#f36c21;transform:scaleX(0.9238)">Pending Client Review</div>
<div class="a t u" style="left:57px;top:265.76px;font-size:8.2px;color:#1c2c6a;transform:scaleX(0.9057)">170850</div>
<div class="a t" style="left:96px;top:265.76px;font-size:8.2px;color:#333;transform:scaleX(0.8694)">AARON BLAKE</div>
<div class="a t" style="left:181px;top:265.76px;font-size:8.2px;color:#333;transform:scaleX(0.9231)">Entire Test Client</div>
<div class="a t" style="left:417px;top:265.76px;font-size:8.2px;color:#3a3a3a;transform:scaleX(0.9382)">30-05-2021</div>
<div class="a t" style="left:463.3px;top:265.76px;font-size:8.2px;color:#3a3a3a;transform:scaleX(0.7863)">SUN</div>
<div class="a t" style="left:488.9px;top:265.76px;font-size:8.2px;color:#3a3a3a;transform:scaleX(0.9201)">PM</div>
<div class="a t" style="left:522px;top:265.76px;font-size:8.2px;color:#3a3a3a;transform:scaleX(0.8976)">14:00</div>
<div class="a t" style="left:548px;top:265.76px;font-size:8.2px;color:#3a3a3a;transform:scaleX(0.8976)">23:00</div>
<div class="a t" style="left:574.3px;top:265.76px;font-size:8.2px;color:#3a3a3a;transform:scaleX(0.811)">0</div>
<div class="a t" style="left:600.3px;top:265.76px;font-size:8.2px;color:#3a3a3a;transform:scaleX(0.8784)">9.00</div>
<div class="a" style="left:633.4px;top:265.76px;width:86.80px;height:12px;overflow:hidden"><div class="a t u" style="left:0;top:0;font-size:8.2px;color:#555;transform:scaleX(0.955)">Waiting Member Response</div></div>
<div class="a t u" style="left:57px;top:279.41px;font-size:8.2px;color:#1c2c6a;transform:scaleX(0.9057)">170851</div>
<div class="a t" style="left:96px;top:279.41px;font-size:8.2px;color:#333;transform:scaleX(0.8694)">AARON BLAKE</div>
<div class="a t" style="left:181px;top:279.41px;font-size:8.2px;color:#333;transform:scaleX(0.9231)">Entire Test Client</div>
<div class="a t" style="left:417px;top:279.41px;font-size:8.2px;color:#3a3a3a;transform:scaleX(0.9382)">31-05-2021</div>
<div class="a t" style="left:463.3px;top:279.41px;font-size:8.2px;color:#3a3a3a;transform:scaleX(0.9262)">MON</div>
<div class="a t" style="left:488.9px;top:279.41px;font-size:8.2px;color:#3a3a3a;transform:scaleX(0.9201)">PM</div>
<div class="a t" style="left:522px;top:279.41px;font-size:8.2px;color:#3a3a3a;transform:scaleX(0.8976)">14:00</div>
<div class="a t" style="left:548px;top:279.41px;font-size:8.2px;color:#3a3a3a;transform:scaleX(0.8976)">23:00</div>
<div class="a t" style="left:574.3px;top:279.41px;font-size:8.2px;color:#3a3a3a;transform:scaleX(0.811)">0</div>
<div class="a t" style="left:600.3px;top:279.41px;font-size:8.2px;color:#3a3a3a;transform:scaleX(0.8784)">9.00</div>
<div class="a t u" style="left:633.4px;top:279.41px;font-size:8.2px;color:#f36c21;transform:scaleX(0.9238)">Pending Client Review</div>
<div class="a t u" style="left:57px;top:293.05px;font-size:8.2px;color:#1c2c6a;transform:scaleX(0.9057)">170821</div>
<div class="a t" style="left:96px;top:293.05px;font-size:8.2px;color:#333;transform:scaleX(0.8016)">APP TEST</div>
<div class="a t" style="left:181px;top:293.05px;font-size:8.2px;color:#333;transform:scaleX(0.9231)">Entire Test Client</div>
<div class="a t" style="left:417px;top:293.05px;font-size:8.2px;color:#3a3a3a;transform:scaleX(0.9382)">31-05-2021</div>
<div class="a t" style="left:463.3px;top:293.05px;font-size:8.2px;color:#3a3a3a;transform:scaleX(0.9262)">MON</div>
<div class="a t" style="left:488.9px;top:293.05px;font-size:8.2px;color:#3a3a3a;transform:scaleX(0.8615)">NS</div>
<div class="a t" style="left:522px;top:293.05px;font-size:8.2px;color:#3a3a3a;transform:scaleX(0.8976)">22:45</div>
<div class="a t" style="left:548px;top:293.05px;font-size:8.2px;color:#3a3a3a;transform:scaleX(0.8976)">23:00</div>
<div class="a t" style="left:574.3px;top:293.05px;font-size:8.2px;color:#3a3a3a;transform:scaleX(0.811)">0</div>
<div class="a t" style="left:600.3px;top:293.05px;font-size:8.2px;color:#3a3a3a;transform:scaleX(0.8784)">0.15</div>
<div class="a t u" style="left:633.4px;top:293.05px;font-size:8.2px;color:#f36c21;transform:scaleX(0.9238)">Pending Client Review</div>
<div class="a t" style="left:11.8px;top:10.60px;font-size:8.7px;color:#3466ae;font-weight:bold;transform:scaleX(0.9461)">Approve Timesheets</div>
<div class="a t" style="left:12.2px;top:28.10px;font-size:6.7px;color:#f26a2c;transform:scaleX(0.8733)">(NOTE:</div>
<div class="a t" style="left:37px;top:28.10px;font-size:6.7px;color:#f26a2c;transform:scaleX(1.0543)">The data that is displayed in red font on screen</div>
<div class="a t" style="left:188.2px;top:28.10px;font-size:6.7px;color:#f26a2c;transform:scaleX(1.063)">indicates that member&#39;s submitted has discrepancies.</div>
<div class="a t" style="left:360.2px;top:28.10px;font-size:6.7px;color:#f26a2c;transform:scaleX(1.066)">Hover on the data to see the original shift data.)</div>
<div class="a t" style="left:15.3px;top:50.40px;font-size:9px;color:#2b2b2b;transform:scaleX(0.8886)">From Date:</div>
<div class="a t" style="left:62.3px;top:50.70px;font-size:7.8px;color:#333;transform:scaleX(0.8928)">01-05-2021 Sat</div>
<div class="a t" style="left:240px;top:50.40px;font-size:9px;color:#2b2b2b;transform:scaleX(0.8475)">To Date</div>
<div class="a t" style="left:273.8px;top:50.70px;font-size:7.8px;color:#333;transform:scaleX(0.9263)">31-05-2021 Mon</div>
<div class="a t" style="left:478.6px;top:50.70px;font-size:8.1px;color:#2b2b2b;transform:scaleX(0.9446)">Show Approved Shifts</div>
<div class="a t" style="left:564.5px;top:50.20px;font-size:9px;color:#fff;-webkit-text-stroke:.15px #fff;transform:scaleX(0.8131)">Search</div>
<div class="a" style="left:57px;top:94.50px;width:33.90px;height:12px;overflow:hidden"><div class="a t" style="left:0;top:0;font-size:8.6px;color:#14245a;font-weight:bold;transform:scaleX(0.8684)">Timeshee</div></div>
<div class="a" style="left:96px;top:94.50px;width:79.90px;height:12px;overflow:hidden"><div class="a t" style="left:0;top:0;font-size:8.6px;color:#14245a;font-weight:bold;transform:scaleX(0.9362)">Member Name</div></div>
<div class="a" style="left:181px;top:94.50px;width:152.20px;height:12px;overflow:hidden"><div class="a t" style="left:0;top:0;font-size:8.6px;color:#14245a;font-weight:bold;transform:scaleX(0.876)">Service Location</div></div>
<div class="a" style="left:338.4px;top:94.50px;width:73.50px;height:12px;overflow:hidden"><div class="a t" style="left:0;top:0;font-size:8.6px;color:#14245a;font-weight:bold;transform:scaleX(0.9158)">Area</div></div>
<div class="a" style="left:417px;top:94.50px;width:41.10px;height:12px;overflow:hidden"><div class="a t" style="left:0;top:0;font-size:8.6px;color:#14245a;font-weight:bold;transform:scaleX(0.9254)">Date</div></div>
<div class="a" style="left:463.2px;top:94.50px;width:20.70px;height:12px;overflow:hidden"><div class="a t" style="left:0;top:0;font-size:8.6px;color:#14245a;font-weight:bold;transform:scaleX(0.888)">Day</div></div>
<div class="a" style="left:489.1px;top:94.50px;width:27.70px;height:12px;overflow:hidden"><div class="a t" style="left:0;top:0;font-size:8.6px;color:#14245a;font-weight:bold;transform:scaleX(0.8642)">Shift</div></div>
<div class="a" style="left:521.6px;top:94.50px;width:21.30px;height:12px;overflow:hidden"><div class="a t" style="left:0;top:0;font-size:8.6px;color:#14245a;font-weight:bold;transform:scaleX(0.934)">Start</div></div>
<div class="a" style="left:548px;top:94.50px;width:21.00px;height:12px;overflow:hidden"><div class="a t" style="left:0;top:0;font-size:8.6px;color:#14245a;font-weight:bold;transform:scaleX(0.7946)">End</div></div>
<div class="a" style="left:574.5px;top:94.50px;width:21.30px;height:12px;overflow:hidden"><div class="a t" style="left:0;top:0;font-size:8.6px;color:#14245a;font-weight:bold;transform:scaleX(0.935)">Break</div></div>
<div class="a" style="left:600.4px;top:94.50px;width:28.20px;height:12px;overflow:hidden"><div class="a t" style="left:0;top:0;font-size:8.6px;color:#14245a;font-weight:bold;transform:scaleX(0.9176)">Wkd Hr</div></div>
<div class="a" style="left:633px;top:94.50px;width:86.90px;height:12px;overflow:hidden"><div class="a t" style="left:0;top:0;font-size:8.6px;color:#14245a;font-weight:bold;transform:scaleX(0.8916)">Review Timesheet</div></div>
<div class="a t" style="left:319.1px;top:391.60px;font-size:7.7px;color:#fff;-webkit-text-stroke:.3px #fff;transform:scaleX(0.9554)">Approve Multiple Timesheets</div>
</div>
</body></html>
